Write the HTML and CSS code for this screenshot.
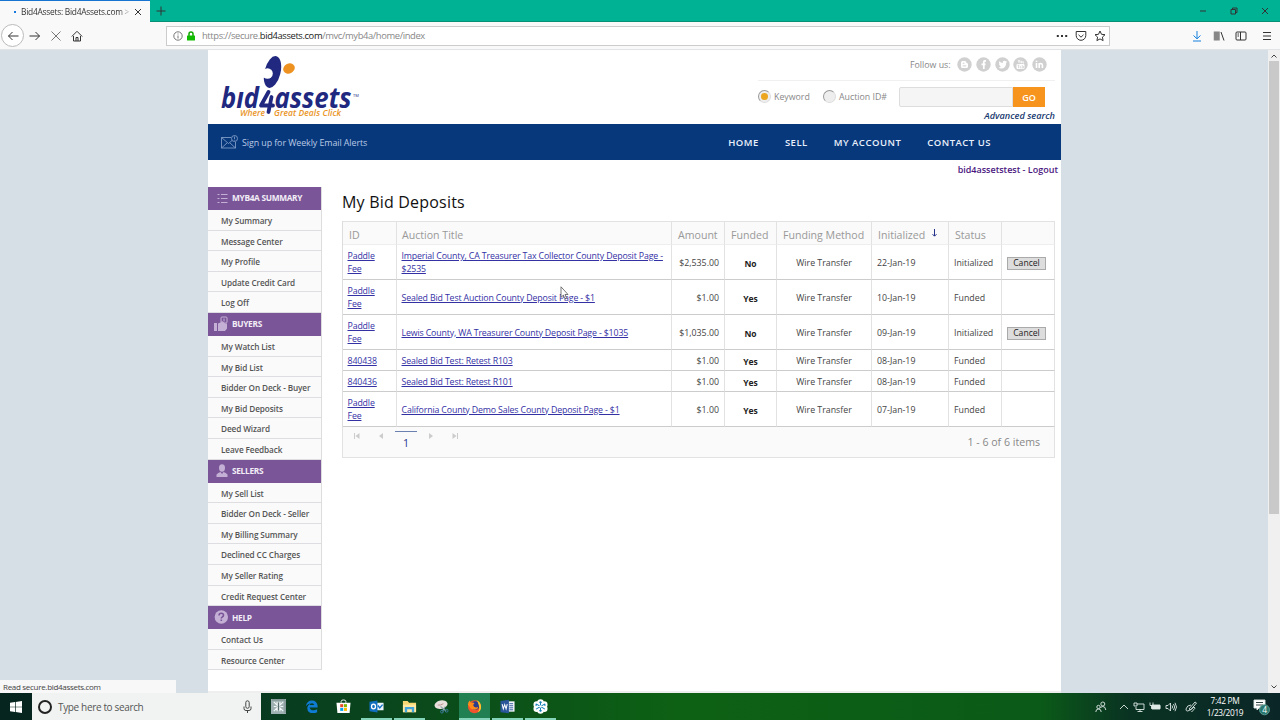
FILE: index.html
```html
<!DOCTYPE html>
<html lang="en">
  <head>
    <meta charset="utf-8" />
    <meta name="viewport" content="width=device-width, initial-scale=1" />
    <title>Bid4Assets: Bid4Assets.com > My Bid Deposits</title>
    <link rel="stylesheet" href="styles.css">
  </head>

  <body>
    <!-- Browser tabs -->
    <div class="tabs">
      <div class="tab">
        <span class="tab__dot"></span>
        <span class="tab__title">Bid4Assets: Bid4Assets.com &gt; I</span>
        <svg class="tab__close" width="8" height="8" viewBox="0 0 8 8"><path d="M1 1l6 6M7 1l-6 6" /></svg>
      </div>
      <svg class="tabs__new" width="10" height="10" viewBox="0 0 10 10"><path d="M5 .5v9M.5 5h9" /></svg>
      <div class="window-buttons">
        <svg width="8" height="8" viewBox="0 0 8 8"><path d="M1 4h6" /></svg>
        <svg width="8" height="8" viewBox="0 0 8 8"><path d="M1 2.500h4.500v4.500H1zM2.500 2.500V1H7v4.500H5.500" /></svg>
        <svg width="8" height="8" viewBox="0 0 8 8"><path d="M1 1l6 6M7 1l-6 6" /></svg>
      </div>
    </div>

    <!-- Browser toolbar -->
    <div class="toolbar">
      <div class="toolbar__nav">
        <span class="back"><svg width="12" height="12" viewBox="0 0 12 12"><path d="M11.500 6H1.500M5.500 2L1.500 6l4 4" /></svg></span>
        <svg width="12" height="12" viewBox="0 0 12 12"><path d="M.5 6h10M6.500 2l4 4-4 4" /></svg>
        <svg class="stop" width="12" height="12" viewBox="0 0 12 12"><path d="M1.500 1.500l9 9M10.500 1.500l-9 9" /></svg>
        <svg width="12" height="12" viewBox="0 0 12 12"><path d="M.8 6.500L6 1.300l5.200 5.200M2.500 6v5h7V6M5 11V7.500h2V11" /></svg>
      </div>
      <div class="address">
        <svg class="address__info" width="10" height="10" viewBox="0 0 10 10"><circle cx="5" cy="5" r="4.200" /><path d="M5 4.500v3M5 2.500v1" /></svg>
        <svg class="address__lock" width="10" height="10" viewBox="0 0 10 10"><path d="M3 5V3a2 2 0 0 1 4 0v2" fill="none" stroke="#12a600" stroke-width="1.500" /><rect x="1" y="4.500" width="8" height="5" rx=".6" fill="#12bc00" /></svg>
        <span class="address__url">https://secure.<b>bid4assets.com</b>/mvc/myb4a/home/index</span>
        <span class="address__icons">
          <svg width="12" height="12" viewBox="0 0 12 12"><path d="M.8 6h2M5 6h2M9.200 6h2" stroke-width="2" /></svg>
          <svg width="12" height="12" viewBox="0 0 12 12"><path d="M1.200 1.500h9.600v4a4.800 4.800 0 0 1-9.600 0zM3.500 4.800L6 7.200l2.500-2.400" /></svg>
          <svg width="12" height="12" viewBox="0 0 12 12"><path d="M6 1l1.500 3.300 3.500.4-2.600 2.400.7 3.500L6 8.900l-3.100 1.700.7-3.500L1 4.700l3.500-.4z" /></svg>
        </span>
      </div>
      <div class="toolbar__right">
        <svg class="download" width="12" height="12" viewBox="0 0 12 12"><path d="M6 1v7.500M2.500 5.500L6 8.800l3.500-3.300M2 11h8" /></svg>
        <svg width="12" height="12" viewBox="0 0 12 12"><path d="M1.500 1.500v9M4.500 1.500v9M6 1.500v9" stroke="#888" stroke-width="1.500" /><path d="M3 1.500v9M8 2l3 8.500" /></svg>
        <svg width="12" height="12" viewBox="0 0 12 12"><rect x="1" y="2" width="10" height="8" rx="1" /><path d="M5.500 2v8M2.500 4h1.500M2.500 6h1.500" /></svg>
        <svg class="menu" width="10" height="12" viewBox="0 0 10 12"><path d="M1 2.500h8M1 6h8M1 9.500h8" /></svg>
      </div>
    </div>

    <div class="viewport">
      <div class="site">
        <header class="header">
          <svg class="logo" width="150" height="70" viewBox="0 0 150 70">
            <ellipse cx="51.500" cy="16" rx="8" ry="16.300" transform="rotate(14 51.500 16)" fill="#20287f" />
            <circle cx="46.500" cy="17.500" r="5.300" fill="#fff" />
            <path d="M42 12.500L40 21l3 1z" fill="#fff" />
            <ellipse cx="68" cy="12.500" rx="6" ry="4.900" transform="rotate(-25 68 12.500)" fill="#ed9121" />
            <text class="logo__name" x="0" y="52" textLength="38" lengthAdjust="spacingAndGlyphs">bıd</text>
            <text class="logo__name" x="53.500" y="52" textLength="77" lengthAdjust="spacingAndGlyphs">assets</text>
            <path d="M47.500 36L40 49.500H52M50.500 41L47.500 56" fill="none" stroke="#20287f" stroke-width="3.800" stroke-linecap="round" stroke-linejoin="round" />
            <text class="logo__tm" x="132" y="41">TM</text>
            <text class="logo__tag" x="19" y="60" textLength="25">Where</text>
            <text class="logo__tag" x="53" y="60" textLength="67">Great Deals Click</text>
          </svg>
          <div class="header__tools">
            <div class="follow">
              <span class="follow__label">Follow us:</span>
              <svg width="15" height="15" viewBox="0 0 15 15"><circle cx="7.500" cy="7.500" r="7.200" /><path d="M4 5.500Q4 4 5.500 4h2.200Q9.500 4 9.500 6q1.500 0 1.500 1.200V9.500q0 1.500-1.500 1.500h-4Q4 11 4 9.500z" fill="#fff" /><path d="M5.700 6.200h1.800M5.700 8.900h3.500" fill="none" stroke="#d0d0d0" stroke-width="1" /></svg>
              <svg width="15" height="15" viewBox="0 0 15 15"><circle cx="7.500" cy="7.500" r="7.200" /><path d="M10 3.800H8.800q-1 0-1 1.200v7M5.500 7.300h4" fill="none" stroke="#fff" stroke-width="1.700" /></svg>
              <svg width="15" height="15" viewBox="0 0 15 15"><circle cx="7.500" cy="7.500" r="7.200" /><path d="M3.500 10.500q1.700.1 2.700-.8-1.300-.2-1.700-1.300h.7Q3.900 8 3.900 6.600l.8.200Q3.500 5.600 4.300 4.300 5.800 6 7.800 6q-.3-2.300 1.600-2.300.8 0 1.300.6l1.200-.5-.7 1.100.9-.2-.9 1Q11.200 11.500 6 11.500q-1.400 0-2.500-1z" fill="#fff" /></svg>
              <svg width="15" height="15" viewBox="0 0 15 15"><circle cx="7.500" cy="7.500" r="7.200" /><path d="M5 2.800l1 2v1.400M7 2.800l-1 2M7.800 4.300h1.100v1.500H7.800zM10 4v2h1" fill="none" stroke="#fff" stroke-width=".8" /><rect x="3.500" y="7" width="8" height="5" rx="1" fill="#fff" /><path d="M4.500 8.200h2M5.500 8.200v3M7.300 9v2h1M9.300 8v3h1.200V9" fill="none" stroke="#d0d0d0" stroke-width=".7" /></svg>
              <svg width="15" height="15" viewBox="0 0 15 15"><circle cx="7.500" cy="7.500" r="7.200" /><path d="M4.500 6v5M4.500 3.700v1.300M7.200 6v5M7.200 8q.2-1.500 1.600-1.500T10.400 8v3" fill="none" stroke="#fff" stroke-width="1.600" /></svg>
            </div>
            <div class="search">
              <span class="radio radio--on"></span>
              <span class="search__label search__label--keyword">Keyword</span>
              <span class="radio"></span>
              <span class="search__label search__label--auction">Auction ID#</span>
              <input class="search__input" type="text" aria-label="Search">
              <button class="search__go">GO</button>
            </div>
            <a class="advanced" href="#">Advanced search</a>
          </div>
        </header>

        <nav class="nav">
          <svg class="nav__mail" width="18" height="14" viewBox="0 0 18 14"><path d="M10 2.500H.5v10.500h14V7M.5 2.500l7 6 3.500-3M.5 13L6 8M14.500 13L9 8" /><circle cx="13.500" cy="3.500" r="3" /><path d="M13.500 1.500v2.500M13.500 4.800v.7" /></svg>
          <a class="nav__alerts" href="#">Sign up for Weekly Email Alerts</a>
          <div class="nav__links">
            <a href="#">HOME</a>
            <a href="#">SELL</a>
            <a href="#">MY ACCOUNT</a>
            <a href="#">CONTACT US</a>
          </div>
        </nav>

        <div class="user"><a href="#">bid4assetstest - Logout</a></div>

        <div class="content">
          <aside class="sidebar">
            <h3 class="sidebar__head">
              <svg width="18" height="16" viewBox="0 0 18 16"><path d="M5.500 4.500h2M9 4.500h6.500M5.500 8.500h2M9 8.500h6.500M5.500 12.500h2M9 12.500h6.500" stroke="#c5b0d5" /></svg>
              MYB4A SUMMARY
            </h3>
            <a href="#">My Summary</a>
            <a href="#">Message Center</a>
            <a href="#">My Profile</a>
            <a href="#">Update Credit Card</a>
            <a href="#">Log Off</a>
            <h3 class="sidebar__head">
              <svg width="18" height="16" viewBox="0 0 18 16"><path d="M2 7h3v8H2zM6 7.500l3.500-1.500V4.500L13 7.500h2v5L13 15H6z" fill="#c5b0d5" /><rect x="9" y="1" width="6" height="6" rx="1" fill="none" stroke="#c5b0d5" /><path d="M12 2.500v3" stroke="#c5b0d5" /></svg>
              BUYERS
            </h3>
            <a href="#">My Watch List</a>
            <a href="#">My Bid List</a>
            <a href="#">Bidder On Deck - Buyer</a>
            <a href="#">My Bid Deposits</a>
            <a href="#">Deed Wizard</a>
            <a href="#">Leave Feedback</a>
            <h3 class="sidebar__head">
              <svg width="18" height="16" viewBox="0 0 18 16"><ellipse cx="10" cy="5" rx="3" ry="3.700" fill="#c5b0d5" /><path d="M4.500 14v-2.500Q6 9.500 8.500 9l1.500 2 1.500-2Q14 9.500 15.500 11.500V14z" fill="#c5b0d5" /></svg>
              SELLERS
            </h3>
            <a href="#">My Sell List</a>
            <a href="#">Bidder On Deck - Seller</a>
            <a href="#">My Billing Summary</a>
            <a href="#">Declined CC Charges</a>
            <a href="#">My Seller Rating</a>
            <a href="#">Credit Request Center</a>
            <h3 class="sidebar__head">
              <svg width="18" height="16" viewBox="0 0 18 16"><circle cx="9.300" cy="8" r="6.700" fill="#c5b0d5" /><path d="M7 6.500Q7 4.300 9.300 4.300t2.200 2q0 1.200-1.300 1.800-.9.500-.9 1.300M9.300 10.500v1.600" fill="none" stroke="#7a5699" stroke-width="1.600" /></svg>
              HELP
            </h3>
            <a href="#">Contact Us</a>
            <a href="#">Resource Center</a>
          </aside>

          <main class="main">
            <h1 class="title">My Bid Deposits</h1>
            <table class="grid">
              <colgroup>
                <col class="c-id"><col class="c-title"><col class="c-amount"><col class="c-funded">
                <col class="c-method"><col class="c-date"><col class="c-status"><col class="c-action">
              </colgroup>
              <thead>
                <tr>
                  <th>ID</th>
                  <th>Auction Title</th>
                  <th>Amount</th>
                  <th>Funded</th>
                  <th>Funding Method</th>
                  <th>Initialized <svg class="sort" width="7" height="9" viewBox="0 0 7 9"><path d="M3.500 0v7M1.500 5.200l2 2 2-2" /></svg></th>
                  <th>Status</th>
                  <th></th>
                </tr>
              </thead>
              <tbody>
                <tr class="tall">
                  <td><a href="#">Paddle<br>Fee</a></td>
                  <td><a href="#">Imperial County, CA Treasurer Tax Collector County Deposit Page -<br>$2535</a></td>
                  <td>$2,535.00</td><td>No</td><td>Wire Transfer</td><td>22-Jan-19</td><td>Initialized</td>
                  <td><button class="cancel">Cancel</button></td>
                </tr>
                <tr class="tall">
                  <td><a href="#">Paddle<br>Fee</a></td>
                  <td><a href="#">Sealed Bid Test Auction County Deposit Page - $1</a></td>
                  <td>$1.00</td><td>Yes</td><td>Wire Transfer</td><td>10-Jan-19</td><td>Funded</td><td></td>
                </tr>
                <tr class="tall">
                  <td><a href="#">Paddle<br>Fee</a></td>
                  <td><a href="#">Lewis County, WA Treasurer County Deposit Page - $1035</a></td>
                  <td>$1,035.00</td><td>No</td><td>Wire Transfer</td><td>09-Jan-19</td><td>Initialized</td>
                  <td><button class="cancel">Cancel</button></td>
                </tr>
                <tr>
                  <td><a href="#">840438</a></td>
                  <td><a href="#">Sealed Bid Test: Retest R103</a></td>
                  <td>$1.00</td><td>Yes</td><td>Wire Transfer</td><td>08-Jan-19</td><td>Funded</td><td></td>
                </tr>
                <tr>
                  <td><a href="#">840436</a></td>
                  <td><a href="#">Sealed Bid Test: Retest R101</a></td>
                  <td>$1.00</td><td>Yes</td><td>Wire Transfer</td><td>08-Jan-19</td><td>Funded</td><td></td>
                </tr>
                <tr class="tall">
                  <td><a href="#">Paddle<br>Fee</a></td>
                  <td><a href="#">California County Demo Sales County Deposit Page - $1</a></td>
                  <td>$1.00</td><td>Yes</td><td>Wire Transfer</td><td>07-Jan-19</td><td>Funded</td><td></td>
                </tr>
              </tbody>
            </table>
            <div class="pager">
              <svg width="6" height="6" viewBox="0 0 6 6"><path d="M0 0h1v6H0zM5.500 0v6L1.500 3z" /></svg>
              <svg width="6" height="6" viewBox="0 0 6 6"><path d="M5 0v6L1 3z" /></svg>
              <span class="pager__page">1</span>
              <svg width="6" height="6" viewBox="0 0 6 6"><path d="M1 0v6l4-3z" /></svg>
              <svg width="6" height="6" viewBox="0 0 6 6"><path d="M.5 0v6l4-3zM5 0h1v6H5z" /></svg>
              <span class="pager__info">1 - 6 of 6 items</span>
            </div>
          </main>
        </div>
      </div>

      <div class="scrollbar">
        <svg width="8" height="6" viewBox="0 0 8 6"><path d="M1.500 4.500L4 2l2.500 2.500" /></svg>
        <div class="scrollbar__thumb"></div>
        <svg width="8" height="6" viewBox="0 0 8 6"><path d="M1.500 1.500L4 4l2.500-2.500" /></svg>
      </div>
      <div class="status">Read secure.bid4assets.com</div>
      <svg class="cursor" width="9" height="14" viewBox="0 0 9 14"><path d="M1 .8v10.500l2.400-2.200 1.500 3.700 1.600-.7L5 8.500h3z" /></svg>
    </div>

    <!-- Windows taskbar -->
    <footer class="taskbar">
      <div class="start"><svg width="12" height="12" viewBox="0 0 12 12"><path d="M0 1.800l5-.7v4.600H0zM5.700 1L12 0v5.700H5.700zM0 6.300h5v4.600l-5-.7zM5.700 6.300H12V12l-6.300-1z" fill="#fff" /></svg></div>
      <div class="cortana">
        <span class="cortana__ring"></span>
        <span class="cortana__text">Type here to search</span>
        <svg width="9" height="13" viewBox="0 0 9 13"><rect x="2.800" y=".8" width="3.400" height="7.500" rx="1.700" /><path d="M1 6.500v2q0 2 2 2h3q2 0 2-2v-2M4.500 10.500V13" /></svg>
      </div>
      <div class="apps">
        <span class="app"><svg width="16" height="16" viewBox="0 0 16 16"><rect width="16" height="16" fill="#9fb1b2" /><path d="M1 1h14v14" fill="none" stroke="#728686" /><path d="M3 3l3.500 3.500V3M13 3L9.500 6.500V3M3 13l3.500-3.500V13M13 13L9.500 9.500V13M3 8h3M10 8h3" fill="none" stroke="#f4f8f8" stroke-width="1.200" /><path d="M8 4v8" stroke="#536b6e" /></svg></span>
        <span class="app"><svg width="16" height="16" viewBox="0 0 16 16"><path d="M2 7.500Q3 1.500 8.500 1.500q5.500 0 6 6V9H6q.5 3 4 3 2 0 4-1v3q-2 1-4.500 1Q4 15 3.500 10 3.500 6.500 7.500 4.500 4 5 2 7.500zM6 6.500h5Q10.500 4.500 8.500 4.500T6 6.500z" fill="#0f7bd2" fill-rule="evenodd" /></svg></span>
        <span class="app"><svg width="16" height="16" viewBox="0 0 16 16"><path d="M5.500 4V2.500Q5.500 1 8 1t2.500 1.500V4" fill="none" stroke="#fff" /><path d="M.5 4h15l-1 11h-13z" fill="#fff" /><path d="M4.500 5.500h3.200v3.200H4.500z" fill="#e84b24" /><path d="M8.500 5.500h3.200v3.200H8.500z" fill="#7fba00" /><path d="M4.500 9.500h3.200v3.200H4.500z" fill="#00a4ef" /><path d="M8.500 9.500h3.200v3.200H8.500z" fill="#ffb900" /></svg></span>
        <span class="app app--open"><svg width="16" height="16" viewBox="0 0 16 16"><path d="M8 4h7.500v8H8z" fill="#e9f4fc" /><path d="M9.500 7l2 2.500L14.500 6" fill="none" stroke="#126fc2" stroke-width="1.500" /><path d="M.5 3L9 1.500v13L.5 13z" fill="#106ebe" /><ellipse cx="4.800" cy="8" rx="2.100" ry="2.500" fill="none" stroke="#fff" stroke-width="1.400" /></svg></span>
        <span class="app app--open"><svg width="16" height="16" viewBox="0 0 16 16"><path d="M1 2h5l1.500 2H15v10H1z" fill="#f7d774" /><path d="M1 6h14v8H1z" fill="#ffe9a2" /><path d="M3 14V8.500h10V14h-2.500v-3h-5v3z" fill="#42a5dc" /></svg></span>
        <span class="app"><svg width="16" height="16" viewBox="0 0 16 16"><ellipse cx="7.500" cy="6" rx="7" ry="4.500" fill="#e9dfdc" transform="rotate(-12 7.500 6)" /><path d="M4 6.500q3 .5 6-1.500" stroke="#b78f8d" fill="none" /><path d="M7 8l6 5M12 8l-3 5" stroke="#8fa6ad" stroke-width="1.200" /><circle cx="8.500" cy="13.500" r="1.500" fill="none" stroke="#3b7da0" /><circle cx="13.500" cy="12.500" r="1.500" fill="none" stroke="#3b7da0" /></svg></span>
        <span class="app app--open app--active"><svg width="16" height="16" viewBox="0 0 16 16"><circle cx="8" cy="8.200" r="7" fill="#f0532d" /><circle cx="8.700" cy="7" r="4.700" fill="#293d8c" /><path d="M1 6Q1 3 3 1.500q0 2 2 2.500 2-.5 3 .5L6.500 6.500Q7 9 9.500 9q2 0 2.500-1-.5 3.500-4 3.500Q4 11.500 2.500 8z" fill="#ff8a19" /><path d="M10 1q5 2 5 7.500 0 4-3.500 5.800Q14 11 12.500 6.500 12 3 10 1z" fill="#ffc72b" /></svg></span>
        <span class="app app--open"><svg width="16" height="16" viewBox="0 0 16 16"><path d="M8 2.500h7.500v11H8z" fill="#f3f6fc" /><path d="M10 5h4M10 7.200h4M10 9.400h4M10 11.500h4" stroke="#2b579a" /><path d="M.5 2L9.500.8v14.400L.5 14z" fill="#2b579a" /><path d="M2.300 5.500l1.200 5L5 6l1.500 4.500 1.200-5" fill="none" stroke="#fff" stroke-width="1.100" /></svg></span>
        <span class="app app--open"><svg width="16" height="16" viewBox="0 0 16 16"><g fill="#fff"><circle cx="8" cy="3.800" r="3.500" /><circle cx="8" cy="12.200" r="3.500" /><circle cx="4" cy="6" r="3.500" /><circle cx="12" cy="6" r="3.500" /><circle cx="4" cy="10.300" r="3.500" /><circle cx="12" cy="10.300" r="3.500" /></g><path d="M8 2.500v11M3.300 5.200l9.400 5.600M12.700 5.200l-9.400 5.600M6.500 3.500h3M6.500 12.500h3M3.300 7.500V5M12.700 7.500V5" stroke="#1682ba" stroke-width="1.100" /><circle cx="8" cy="8" r="1.400" fill="#fff" /></svg></span>
      </div>
      <div class="tray">
        <svg class="tray__people" width="12" height="12" viewBox="0 0 12 12"><circle cx="7.800" cy="3" r="2" /><circle cx="3.500" cy="6" r="1.700" /><path d="M.8 11q0-3 2.700-3t2.700 3M5.500 7Q6 5.500 7.800 5.500 10.500 5.500 10.800 9" /></svg>
        <svg class="tray__up" width="10" height="12" viewBox="0 0 10 12"><path d="M1 8l4-4 4 4" /></svg>
        <svg width="12" height="12" viewBox="0 0 12 12"><path d="M4 3h7v5.500H3V6M4.500 10.500h5M7 8.500v2" /><path d="M1 2h3v3H1z" /></svg>
        <svg width="12" height="12" viewBox="0 0 12 12"><path d="M3 4h8v4H3z" fill="#dfe9e6" /><path d="M1 1.500v3h3v-3M2.500 4.500v3h2M12 5.500v1" /></svg>
        <svg width="12" height="12" viewBox="0 0 12 12"><path d="M1 4.500h2L5.500 2v8L3 7.500H1zM7 4.500q1.200 1.500 0 3M8.500 3q2.300 3 0 6M10 1.800q3 4.200 0 8.400" /></svg>
        <svg class="tray__pen" width="12" height="12" viewBox="0 0 12 12"><path d="M4 8l6-7 1.500 1-6 7zM6 4Q2 4 1 8q0 3 3 1.500T9 6q2 1 0 2.500T6.500 11" /></svg>
        <div class="clock">7:42 PM<br>1/23/2019</div>
        <svg class="tray__note" width="18" height="18" viewBox="0 0 18 18"><path d="M1 2h11v8H6l-2 2v-2H1z" fill="#fff" /><path d="M3 4.500h7M3 7h7" stroke="#17302e" /><circle cx="11.500" cy="11.800" r="5" fill="#28786f" stroke="#5f9f95" /><text x="9.200" y="15" fill="#fff">4</text></svg>
      </div>
    </footer>
  </body>
</html>
```

FILE: styles.css
```css
* {
  box-sizing: border-box;
}

body {
  display: flex;
  flex-direction: column;
  width: 1280px;
  height: 720px;
  margin: 0;
  overflow: hidden;
  color: #444;
  font-family: "Open Sans", sans-serif;
  font-size: 8.8px;
}

a {
  color: inherit;
  text-decoration: none;
}

svg {
  display: block;
  flex: none;
}

button {
  font-family: inherit;
}

/* browser chrome */
.tabs {
  display: flex;
  align-items: center;
  height: 22px;
  background: #00b294;
  border-bottom: 1px solid #079078;
}

.tabs svg,
.toolbar svg {
  fill: none;
  stroke: #333;
}

.tab {
  display: flex;
  align-items: center;
  align-self: flex-start;
  width: 150px;
  height: 22px;
  padding-left: 14px;
  background: #f9f9fa;
  border-top: 1px solid #1774d1;
}

.tab__dot {
  width: 2px;
  height: 2px;
  margin-right: 5px;
  background: #167adf;
}

.tab__title {
  width: 111px;
  color: #333;
  font-size: 8.4px;
  letter-spacing: -0.25px;
  white-space: nowrap;
  -webkit-mask-image: linear-gradient(90deg, #000 88%, transparent);
}

.tab__close {
  margin-left: 2px;
}

.tabs__new {
  margin-left: 6px;
}

.window-buttons {
  display: flex;
  gap: 23px;
  margin-left: auto;
  padding-right: 11px;
}

.toolbar {
  display: flex;
  align-items: center;
  height: 28px;
  background: #f9f9fa;
  border-bottom: 1px solid #e1e4e7;
}

.toolbar__nav {
  display: flex;
  align-items: center;
  gap: 9px;
  width: 166px;
  padding-left: 1px;
}

.toolbar .stop {
  stroke: #777;
}

.back {
  display: flex;
  align-items: center;
  justify-content: center;
  width: 23px;
  height: 23px;
  margin-right: -4px;
  background: #fff;
  border: 1px solid #bbb;
  border-radius: 50%;
}

.address {
  display: flex;
  align-items: center;
  width: 944px;
  height: 20px;
  padding: 0 3px 0 6px;
  background: #fff;
  border: 1px solid #ccc;
}

.toolbar .address__info {
  stroke: #777;
}

.toolbar .address__lock {
  margin-left: 3px;
  stroke: none;
}

.address__url {
  margin-left: 6px;
  color: #888;
  font-size: 9.4px;
  letter-spacing: -0.38px;
}

.address__url b {
  color: #222;
  font-weight: 400;
}

.address__icons {
  display: flex;
  gap: 7px;
  margin-left: auto;
}

.toolbar__right {
  display: flex;
  align-items: center;
  gap: 10px;
  margin-left: auto;
  padding-right: 8px;
}

.toolbar .download {
  stroke: #1681dd;
}

.menu {
  margin-left: 5px;
}

/* page */
.viewport {
  position: relative;
  display: flex;
  height: 643px;
  padding-left: 208px;
  background: #d7dfe6;
}

.site {
  width: 853px;
  background: #fff;
  border-bottom: 2px solid #eee;
}

.header {
  display: flex;
  justify-content: space-between;
  height: 74px;
}

.logo {
  margin: 6px 0 0 13px;
}

.logo__name {
  fill: #20287f;
  font-family: "Open Sans", sans-serif;
  font-size: 28px;
  font-style: italic;
  font-weight: 700;
}

.logo__tm {
  fill: #20287f;
  font-size: 4px;
}

.logo__tag {
  fill: #e99425;
  font-size: 8.5px;
  font-style: italic;
  font-weight: 600;
}

.header__tools {
  display: flex;
  flex-direction: column;
  width: 303px;
  padding: 6px 6px 0 0;
  color: #888;
}

.follow {
  display: flex;
  align-items: center;
  justify-content: flex-end;
  gap: 3.700px;
  height: 25px;
  padding: 0 8px 7px 0;
  border-bottom: 1px solid #f0f0f0;
}

.follow svg {
  fill: #d0d0d0;
}

.follow__label {
  margin-right: 3px;
}

.search {
  display: flex;
  align-items: center;
  height: 20px;
  margin-top: 6px;
}

.radio {
  display: flex;
  width: 13px;
  height: 13px;
  margin-top: -2px;
  background: #eee;
  border: 1px solid #999;
  border-right-color: #ddd;
  border-bottom-color: #ddd;
  border-radius: 50%;
}

.radio--on::after {
  width: 7px;
  height: 7px;
  margin: 2px;
  background: #eca51e;
  border-radius: 50%;
  content: "";
}

.search__label {
  margin: -1px 0 0 3px;
}

.search__label--keyword {
  width: 49px;
}

.search__label--auction {
  width: 60px;
}

.search__input {
  width: 114px;
  height: 20px;
  padding: 0;
  background: #f5f5f5;
  border: 1px solid #ddd;
  border-radius: 2px 0 0 2px;
}

.search__go {
  width: 32px;
  height: 20px;
  padding: 0;
  background: #f7941e;
  border: 0;
  color: #fff;
  font-size: 9px;
  font-weight: 600;
}

.advanced {
  align-self: flex-end;
  margin-top: 2px;
  color: #17396f;
  font-size: 9.2px;
  font-style: italic;
  font-weight: 600;
}

.nav {
  display: flex;
  align-items: center;
  height: 36px;
  padding: 0 70px 0 13px;
  background: #08387c;
}

.nav__mail {
  fill: none;
  stroke: #8ba6ce;
  stroke-width: 0.8;
}

.nav__alerts {
  margin-left: 3px;
  color: #b8c9e5;
  font-size: 8.9px;
  letter-spacing: -0.08px;
}

.nav__links {
  display: flex;
  gap: 26px;
  margin-left: auto;
  color: #e8f0fb;
  font-size: 9.5px;
  font-weight: 600;
  letter-spacing: 0.5px;
}

.user {
  height: 27px;
  padding: 3px 3px 0 0;
  color: #4b1780;
  font-size: 9px;
  font-weight: 600;
  text-align: right;
}

.content {
  display: flex;
  gap: 20px;
}

.sidebar {
  width: 114px;
  background: #fafafb;
  border-right: 1px solid #ddd;
  color: #555;
  font-size: 8.2px;
  font-weight: 600;
  letter-spacing: -0.1px;
}

.sidebar__head {
  display: flex;
  align-items: center;
  gap: 2px;
  height: 22.900px;
  margin: 0;
  padding: 0 0 1px 4px;
  background: #7a5699;
  color: #f2edf6;
  font-size: 8.3px;
  font-weight: 700;
  letter-spacing: -0.3px;
}

.sidebar a {
  display: block;
  height: 20.64px;
  padding-left: 13px;
  border-bottom: 1px solid #dedee2;
  line-height: 21px;
}

.main {
  width: 713px;
}

.title {
  margin: 0;
  height: 34px;
  color: #111;
  font-size: 16px;
  font-weight: 500;
  letter-spacing: 0.2px;
  line-height: 30px;
}

.grid {
  width: 713px;
  border-collapse: separate;
  border-left: 1px solid #ddd;
  border-spacing: 0;
  table-layout: fixed;
}

.c-id { width: 54px; }
.c-title { width: 275px; }
.c-amount { width: 53px; }
.c-funded { width: 52px; }
.c-method { width: 95px; }
.c-date { width: 77px; }
.c-status { width: 53px; }
.c-action { width: 53px; }

.grid th,
.grid td {
  border-right: 1px solid #e2e2e2;
  white-space: nowrap;
}

.grid th {
  height: 24px;
  padding: 3px 6px 0;
  background: #fafafa;
  border-top: 1px solid #e2e2e2;
  border-bottom: 1px solid #eee;
  color: #999;
  font-size: 10.6px;
  font-weight: 400;
  text-align: left;
}

.grid th:nth-child(2) {
  padding-left: 5px;
}

.grid td {
  height: 21px;
  padding: 2px 5px 0;
  border-bottom: 1px solid #ccc;
  line-height: 13px;
}

.grid .tall td {
  height: 35px;
}

.grid td:first-child,
.grid td:nth-child(2) {
  padding-left: 4.500px;
}

.grid td a {
  color: #3431a5;
  letter-spacing: -0.15px;
  text-decoration: underline;
}

.grid td:nth-child(3) {
  text-align: right;
}

.grid td:nth-child(4),
.grid td:nth-child(5) {
  text-align: center;
}

.grid td:nth-child(4) {
  color: #222;
  font-size: 8.5px;
  font-weight: 700;
}

.sort {
  display: inline-block;
  margin-left: 3px;
  vertical-align: 1px;
  fill: none;
  stroke: #24328a;
}

.cancel {
  display: block;
  width: 39px;
  height: 13px;
  padding: 0;
  background: #ddd;
  border: 1px solid #aaa;
  color: #222;
  font-size: 8.6px;
  line-height: 11px;
}

.pager {
  display: flex;
  height: 31px;
  background: #fafafa;
  border: 1px solid #e2e2e2;
  border-top: 0;
}

.pager svg {
  margin: 6px 7px 0 11px;
  fill: #ccc;
}

.pager svg:nth-child(2) {
  margin: 6px 11px 0;
}

.pager__page {
  width: 22px;
  height: 24px;
  margin-top: 4px;
  border-top: 1px solid #6b82b0;
  color: #24368c;
  font-size: 10.6px;
  line-height: 22px;
  text-align: center;
}

.pager__info {
  margin-left: auto;
  padding-right: 14px;
  color: #888;
  font-size: 10.6px;
  line-height: 30px;
}

.scrollbar {
  display: flex;
  flex-direction: column;
  align-items: center;
  width: 12px;
  margin-left: auto;
  padding: 3px 0;
  background: #f0f0f0;
}

.scrollbar svg {
  fill: none;
  stroke: #444;
}

.scrollbar svg:last-child {
  margin-top: auto;
}

.scrollbar__thumb {
  width: 10px;
  height: 453px;
  margin-top: 2px;
  background: #c9c9c9;
}

.status {
  position: absolute;
  bottom: 0;
  left: 0;
  width: 176px;
  height: 13px;
  padding-left: 3px;
  background: #f8f8f8;
  color: #444;
  font-size: 8px;
  letter-spacing: -0.3px;
  line-height: 14px;
}

.cursor {
  position: absolute;
  top: 236px;
  left: 560px;
  fill: #fff;
  stroke: #555;
  stroke-width: 0.8;
}

/* taskbar */
.taskbar {
  display: flex;
  height: 27px;
  background: linear-gradient(90deg, #07251f 0, #07251f 100px, #083b20 270px, #0b4f19 480px, #0d6114 680px, #0b5a18 1040px, #093222 1130px, #0b2627 1280px);
  color: #fff;
}

.start {
  display: flex;
  align-items: center;
  justify-content: center;
  width: 32px;
}

.cortana {
  display: flex;
  align-items: center;
  width: 229px;
  padding: 0 9px 0 6px;
  background: #f1f3f2;
  color: #555;
}

.cortana__ring {
  width: 14px;
  height: 14px;
  border: 2px solid #222;
  border-radius: 50%;
}

.cortana__text {
  margin-left: 6px;
  font-size: 10px;
  letter-spacing: -0.35px;
}

.cortana svg {
  margin-left: auto;
  fill: none;
  stroke: #444;
}

.apps {
  display: flex;
  gap: 1.700px;
  padding-left: 2px;
}

.app {
  display: flex;
  justify-content: center;
  width: 31px;
  padding-top: 6px;
}

.app svg {
  width: 15px;
  height: 15px;
}

.app--open {
  border-bottom: 2px solid #83d4b9;
}

.app--active {
  background: #218052;
}

.tray {
  display: flex;
  align-items: center;
  margin-left: auto;
  padding-right: 9px;
  gap: 4px;
}

.tray svg {
  fill: none;
  stroke: #dfe9e6;
  stroke-width: 0.9;
}

.tray .tray__people {
  margin-right: 8px;
}

.tray .tray__pen {
  margin-left: 4px;
}

.clock {
  width: 42px;
  margin-left: 3px;
  font-size: 8.3px;
  letter-spacing: -0.3px;
  line-height: 12px;
  text-align: center;
}

.tray .tray__note {
  margin-left: 3px;
}

.tray__note text {
  font-size: 8.5px;
  stroke: none;
}
```
